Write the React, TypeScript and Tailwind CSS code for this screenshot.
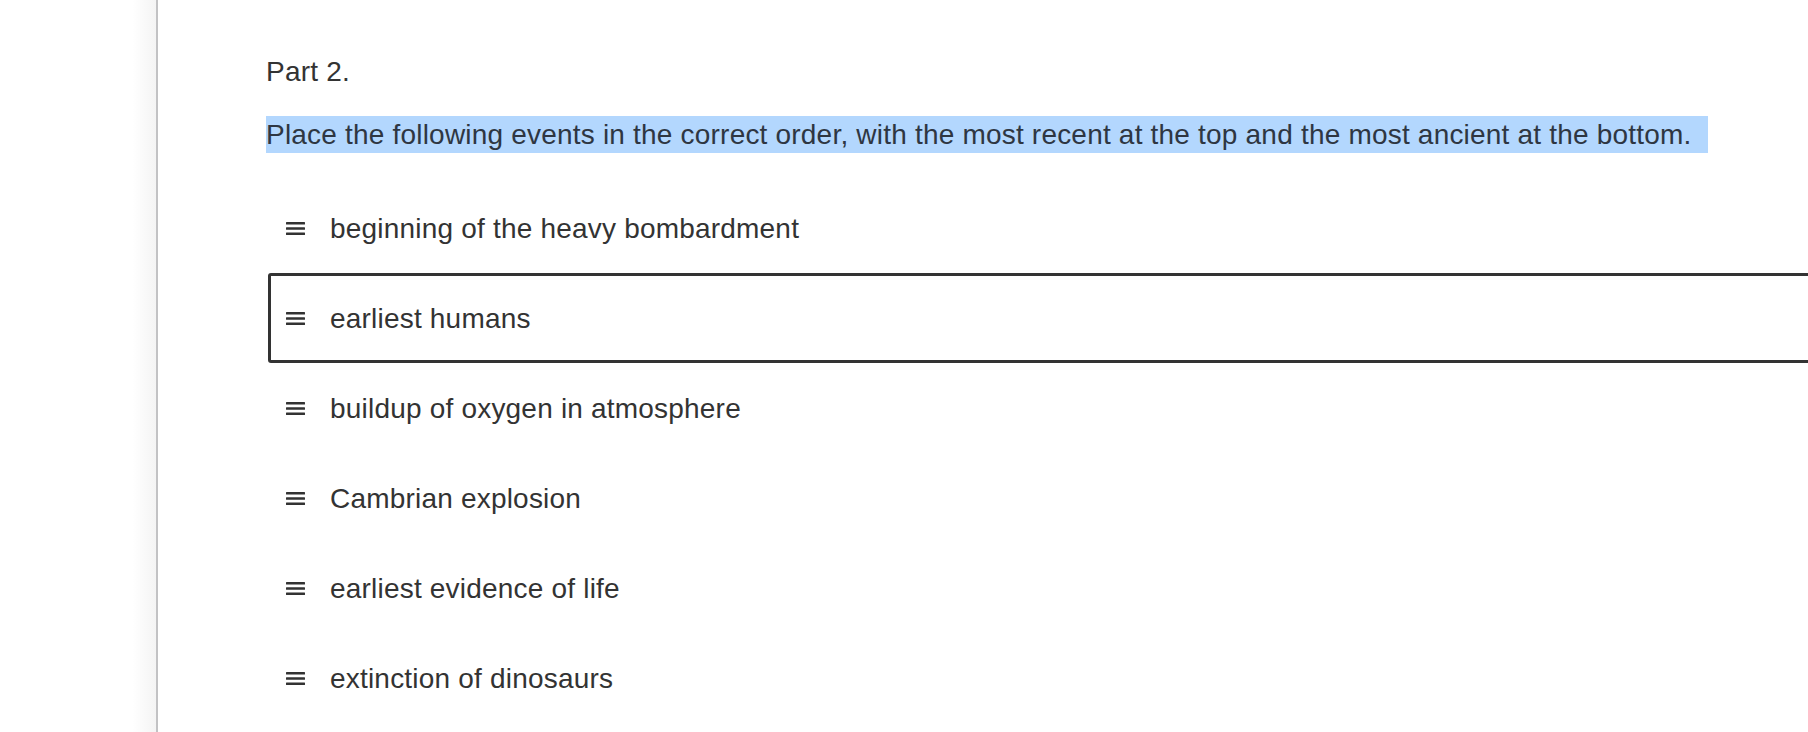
import { useState } from 'react';

const events = [
  'beginning of the heavy bombardment',
  'earliest humans',
  'buildup of oxygen in atmosphere',
  'Cambrian explosion',
  'earliest evidence of life',
  'extinction of dinosaurs',
];

function DragHandle() {
  return (
    <svg width="19" height="13" viewBox="0 0 19 13" className="shrink-0" aria-hidden="true">
      <rect x="0" y="0" width="19" height="2.6" rx="0.5" fill="#333" />
      <rect x="0" y="5.2" width="19" height="2.6" rx="0.5" fill="#333" />
      <rect x="0" y="10.4" width="19" height="2.6" rx="0.5" fill="#333" />
    </svg>
  );
}

export default function App() {
  const [focused, setFocused] = useState(1);

  return (
    <div className="flex h-[732px] w-full overflow-hidden bg-white font-['Liberation_Sans',Arial,sans-serif] text-[#333]">
      {/* left gutter */}
      <div className="w-[156px] shrink-0 bg-gradient-to-r from-white from-85% to-[#f4f4f4]" />
      <div className="w-[2px] shrink-0 bg-[#c2c2c4]" />

      {/* question body */}
      <main className="min-w-0 flex-1 pl-[108px] pt-[53px] text-[28px] leading-[37px] tracking-[0.2px]">
        <p>Part 2.</p>
        <p className="mt-[26px] text-[#2e3642]">
          <span className="inline-block bg-[#b3d7fe] pr-4">
            Place the following events in the correct order, with the most recent at the top and the most ancient at the bottom.
          </span>
        </p>

        <ul className="mt-[30px] ml-[2px] w-[1600px]">
          {events.map((ev, i) => (
            <li
              key={ev}
              onClick={() => setFocused(i)}
              className={
                i === focused
                  ? 'flex h-[90px] cursor-grab items-center gap-[25px] rounded-[3px] border-[3px] border-[#333] pl-[15px]'
                  : 'flex h-[90px] cursor-grab items-center gap-[25px] rounded-[3px] border-[3px] border-transparent pl-[15px]'
              }
            >
              <DragHandle />
              <span>{ev}</span>
            </li>
          ))}
        </ul>
      </main>
    </div>
  );
}
